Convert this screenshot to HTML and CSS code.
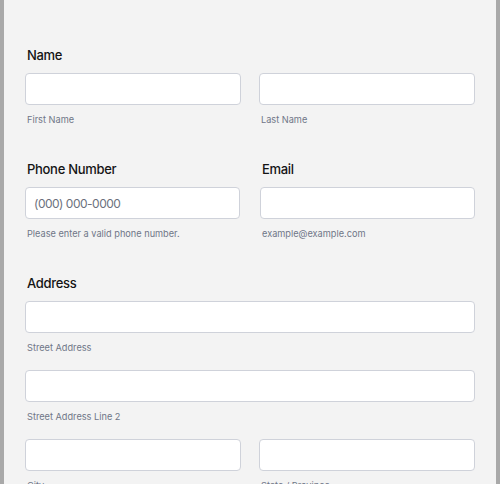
FILE: index.html
```html
<!DOCTYPE html>
<html>
<head>
<meta charset="utf-8">
<link rel="stylesheet" href="styles.css">
</head>
<body>
<div class="frame">
  <form class="form">
    <div class="field">
      <div class="label">Name</div>
      <div class="cols cols-name">
        <div class="sub">
          <div class="input"></div>
          <div class="hint">First Name</div>
        </div>
        <div class="sub">
          <div class="input"></div>
          <div class="hint">Last Name</div>
        </div>
      </div>
    </div>
    <div class="cols cols-contact">
      <div class="field">
        <div class="label">Phone Number</div>
        <div class="input"><span class="ph">(000) 000-0000</span></div>
        <div class="hint">Please enter a valid phone number.</div>
      </div>
      <div class="field">
        <div class="label">Email</div>
        <div class="input"></div>
        <div class="hint">example@example.com</div>
      </div>
    </div>
    <div class="field">
      <div class="label">Address</div>
      <div class="sub">
        <div class="input"></div>
        <div class="hint">Street Address</div>
      </div>
      <div class="sub">
        <div class="input"></div>
        <div class="hint">Street Address Line 2</div>
      </div>
      <div class="cols cols-name">
        <div class="sub">
          <div class="input"></div>
          <div class="hint">City</div>
        </div>
        <div class="sub">
          <div class="input"></div>
          <div class="hint">State / Province</div>
        </div>
      </div>
    </div>
  </form>
</div>
</body>
</html>
```
FILE: styles.css
```css
* { box-sizing: border-box; }
html, body { margin: 0; padding: 0; }
body {
  width: 500px;
  height: 484px;
  overflow: hidden;
  background: #f3f3f3;
  font-family: Inter, "Noto Sans", sans-serif;
}
.frame {
  height: 484px;
  border-left: 4px solid #a9a9a9;
  border-right: 4px solid #a9a9a9;
  background: #f3f3f3;
}
.form {
  padding: 45px 21px 0 21px;
  display: flex;
  flex-direction: column;
  gap: 32px;
}
.field { display: flex; flex-direction: column; }
.label {
  font-size: 13px;
  line-height: 20px;
  font-weight: 500;
  letter-spacing: -0.3px;
  color: #141414;
  padding-left: 2px;
  margin-bottom: 8px;
}
.cols { display: grid; grid-template-columns: 1fr 1fr; }
.cols-name { column-gap: 18px; }
.cols-contact { column-gap: 20px; }
.sub { display: flex; flex-direction: column; }
.field > .sub + .sub, .field > .sub + .cols { margin-top: 15px; }
.input {
  height: 32px;
  background: #fff;
  border: 1px solid #cfd2da;
  border-radius: 4px;
  display: flex;
  align-items: center;
  padding-left: 8px;
}
.ph {
  font-size: 12px;
  letter-spacing: -0.5px;
  color: #6c717d;
}
.hint {
  margin-top: 8px;
  font-size: 9.2px;
  line-height: 14px;
  color: #6f7687;
  padding-left: 2px;
}
```
